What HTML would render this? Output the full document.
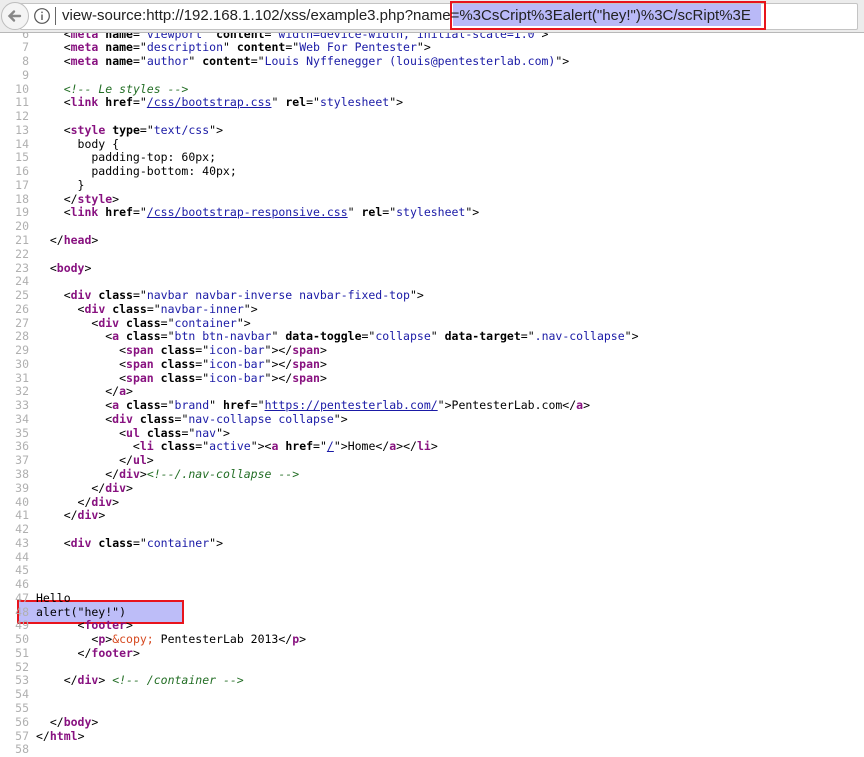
<!DOCTYPE html>
<html><head><meta charset="utf-8"><style>
html,body{margin:0;padding:0;background:#fff;width:864px;height:750px;overflow:hidden}
#bar{position:absolute;left:0;top:0;width:864px;height:32px;background:#ececec;border-bottom:1px solid #b8b8b8;z-index:5}
#field{position:absolute;left:20px;top:3px;width:836px;height:25px;background:#fff;border:1px solid #c4c4c4;border-radius:2px}
#back{position:absolute;left:1px;top:2px;width:26px;height:26px;border-radius:50%;background:#f4f4f4;border:1px solid #bdbdbd;z-index:6}
#url{position:absolute;left:62px;top:7px;font:15px "Liberation Sans",sans-serif;color:#222;white-space:pre;z-index:7}
#sel{position:absolute;left:450px;top:1px;width:312px;height:25px;border:2px solid #e8141c;z-index:6}
#selfill{position:absolute;left:453px;top:4px;width:308px;height:22px;background:#b9b9f7;z-index:6}
#code{position:absolute;left:0;top:27.5px;font:11.5px "DejaVu Sans Mono",monospace;color:#000}
.l{position:relative;height:13.78px;line-height:13.78px;white-space:pre}
.n{position:absolute;left:0;width:29px;text-align:right;color:#b0b0b0}
.c0{position:absolute;left:36px}
.t{color:#881280;font-weight:bold}
.a{font-weight:bold}
.v{color:#1a1aa6}
.u{color:#1a1aa6;text-decoration:underline}
.c{color:#236e25;font-style:italic}
.e{color:#d6481e}
#hl{position:absolute;left:17px;top:600px;width:163px;height:20px;border:2px solid #e8141c;background:#bdbdf8;z-index:1}
#code{z-index:2}
</style></head><body>
<div id="bar">
<div id="field"></div>
<div id="back"><svg width="26" height="26" viewBox="0 0 26 26"><path d="M18 13H8M12 8.5 7.5 13 12 17.5" stroke="#888" stroke-width="2.4" fill="none" stroke-linecap="round"/></svg></div>
<svg style="position:absolute;left:33px;top:7px;z-index:7" width="18" height="18" viewBox="0 0 18 18"><circle cx="9" cy="9" r="7.3" fill="none" stroke="#555" stroke-width="1.2"/><rect x="8.3" y="7.5" width="1.4" height="5.5" fill="#555"/><rect x="8.3" y="4.6" width="1.4" height="1.5" fill="#555"/></svg>
<div style="position:absolute;left:55px;top:7px;width:1px;height:18px;background:#666;z-index:7"></div>
<div id="selfill"></div><div id="sel"></div>
<div id="url">view-source:http://192.168.1.102/xss/example3.php?name=%3CsCript%3Ealert("hey!")%3C/scRipt%3E</div>
</div>
<div id="hl"></div>
<div id="code">
<div class="l"><span class="n">6</span><span class="c0">    &lt;<span class="t">meta</span> <span class="a">name</span>="<span class="v">viewport</span>" <span class="a">content</span>="<span class="v">width=device-width, initial-scale=1.0</span>"&gt;</span></div>
<div class="l"><span class="n">7</span><span class="c0">    &lt;<span class="t">meta</span> <span class="a">name</span>="<span class="v">description</span>" <span class="a">content</span>="<span class="v">Web For Pentester</span>"&gt;</span></div>
<div class="l"><span class="n">8</span><span class="c0">    &lt;<span class="t">meta</span> <span class="a">name</span>="<span class="v">author</span>" <span class="a">content</span>="<span class="v">Louis Nyffenegger (louis@pentesterlab.com)</span>"&gt;</span></div>
<div class="l"><span class="n">9</span></div>
<div class="l"><span class="n">10</span><span class="c0">    <span class="c">&lt;!-- Le styles --&gt;</span></span></div>
<div class="l"><span class="n">11</span><span class="c0">    &lt;<span class="t">link</span> <span class="a">href</span>="<span class="u">/css/bootstrap.css</span>" <span class="a">rel</span>="<span class="v">stylesheet</span>"&gt;</span></div>
<div class="l"><span class="n">12</span></div>
<div class="l"><span class="n">13</span><span class="c0">    &lt;<span class="t">style</span> <span class="a">type</span>="<span class="v">text/css</span>"&gt;</span></div>
<div class="l"><span class="n">14</span><span class="c0">      body {</span></div>
<div class="l"><span class="n">15</span><span class="c0">        padding-top: 60px;</span></div>
<div class="l"><span class="n">16</span><span class="c0">        padding-bottom: 40px;</span></div>
<div class="l"><span class="n">17</span><span class="c0">      }</span></div>
<div class="l"><span class="n">18</span><span class="c0">    &lt;/<span class="t">style</span>&gt;</span></div>
<div class="l"><span class="n">19</span><span class="c0">    &lt;<span class="t">link</span> <span class="a">href</span>="<span class="u">/css/bootstrap-responsive.css</span>" <span class="a">rel</span>="<span class="v">stylesheet</span>"&gt;</span></div>
<div class="l"><span class="n">20</span></div>
<div class="l"><span class="n">21</span><span class="c0">  &lt;/<span class="t">head</span>&gt;</span></div>
<div class="l"><span class="n">22</span></div>
<div class="l"><span class="n">23</span><span class="c0">  &lt;<span class="t">body</span>&gt;</span></div>
<div class="l"><span class="n">24</span></div>
<div class="l"><span class="n">25</span><span class="c0">    &lt;<span class="t">div</span> <span class="a">class</span>="<span class="v">navbar navbar-inverse navbar-fixed-top</span>"&gt;</span></div>
<div class="l"><span class="n">26</span><span class="c0">      &lt;<span class="t">div</span> <span class="a">class</span>="<span class="v">navbar-inner</span>"&gt;</span></div>
<div class="l"><span class="n">27</span><span class="c0">        &lt;<span class="t">div</span> <span class="a">class</span>="<span class="v">container</span>"&gt;</span></div>
<div class="l"><span class="n">28</span><span class="c0">          &lt;<span class="t">a</span> <span class="a">class</span>="<span class="v">btn btn-navbar</span>" <span class="a">data-toggle</span>="<span class="v">collapse</span>" <span class="a">data-target</span>="<span class="v">.nav-collapse</span>"&gt;</span></div>
<div class="l"><span class="n">29</span><span class="c0">            &lt;<span class="t">span</span> <span class="a">class</span>="<span class="v">icon-bar</span>"&gt;&lt;/<span class="t">span</span>&gt;</span></div>
<div class="l"><span class="n">30</span><span class="c0">            &lt;<span class="t">span</span> <span class="a">class</span>="<span class="v">icon-bar</span>"&gt;&lt;/<span class="t">span</span>&gt;</span></div>
<div class="l"><span class="n">31</span><span class="c0">            &lt;<span class="t">span</span> <span class="a">class</span>="<span class="v">icon-bar</span>"&gt;&lt;/<span class="t">span</span>&gt;</span></div>
<div class="l"><span class="n">32</span><span class="c0">          &lt;/<span class="t">a</span>&gt;</span></div>
<div class="l"><span class="n">33</span><span class="c0">          &lt;<span class="t">a</span> <span class="a">class</span>="<span class="v">brand</span>" <span class="a">href</span>="<span class="u">https://pentesterlab.com/</span>"&gt;PentesterLab.com&lt;/<span class="t">a</span>&gt;</span></div>
<div class="l"><span class="n">34</span><span class="c0">          &lt;<span class="t">div</span> <span class="a">class</span>="<span class="v">nav-collapse collapse</span>"&gt;</span></div>
<div class="l"><span class="n">35</span><span class="c0">            &lt;<span class="t">ul</span> <span class="a">class</span>="<span class="v">nav</span>"&gt;</span></div>
<div class="l"><span class="n">36</span><span class="c0">              &lt;<span class="t">li</span> <span class="a">class</span>="<span class="v">active</span>"&gt;&lt;<span class="t">a</span> <span class="a">href</span>="<span class="u">/</span>"&gt;Home&lt;/<span class="t">a</span>&gt;&lt;/<span class="t">li</span>&gt;</span></div>
<div class="l"><span class="n">37</span><span class="c0">            &lt;/<span class="t">ul</span>&gt;</span></div>
<div class="l"><span class="n">38</span><span class="c0">          &lt;/<span class="t">div</span>&gt;<span class="c">&lt;!--/.nav-collapse --&gt;</span></span></div>
<div class="l"><span class="n">39</span><span class="c0">        &lt;/<span class="t">div</span>&gt;</span></div>
<div class="l"><span class="n">40</span><span class="c0">      &lt;/<span class="t">div</span>&gt;</span></div>
<div class="l"><span class="n">41</span><span class="c0">    &lt;/<span class="t">div</span>&gt;</span></div>
<div class="l"><span class="n">42</span></div>
<div class="l"><span class="n">43</span><span class="c0">    &lt;<span class="t">div</span> <span class="a">class</span>="<span class="v">container</span>"&gt;</span></div>
<div class="l"><span class="n">44</span></div>
<div class="l"><span class="n">45</span></div>
<div class="l"><span class="n">46</span></div>
<div class="l"><span class="n">47</span><span class="c0">Hello</span></div>
<div class="l"><span class="n">48</span><span class="c0">alert("hey!")</span></div>
<div class="l"><span class="n">49</span><span class="c0">      &lt;<span class="t">footer</span>&gt;</span></div>
<div class="l"><span class="n">50</span><span class="c0">        &lt;<span class="t">p</span>&gt;<span class="e">&amp;copy;</span> PentesterLab 2013&lt;/<span class="t">p</span>&gt;</span></div>
<div class="l"><span class="n">51</span><span class="c0">      &lt;/<span class="t">footer</span>&gt;</span></div>
<div class="l"><span class="n">52</span></div>
<div class="l"><span class="n">53</span><span class="c0">    &lt;/<span class="t">div</span>&gt; <span class="c">&lt;!-- /container --&gt;</span></span></div>
<div class="l"><span class="n">54</span></div>
<div class="l"><span class="n">55</span></div>
<div class="l"><span class="n">56</span><span class="c0">  &lt;/<span class="t">body</span>&gt;</span></div>
<div class="l"><span class="n">57</span><span class="c0">&lt;/<span class="t">html</span>&gt;</span></div>
<div class="l"><span class="n">58</span></div>
</div>
</body></html>
